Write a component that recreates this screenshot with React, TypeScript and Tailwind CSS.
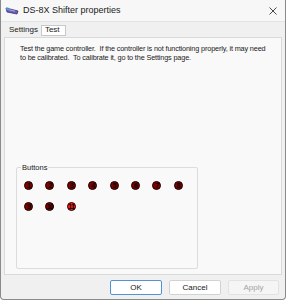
import React from 'react';

const buttons = [1, 2, 3, 4, 5, 6, 7, 8, 9, 10, 11];
const pressed = [11];

const App: React.FC = () => {
  return (
    <div
      className="w-[286px] h-[300px] flex flex-col bg-[#f0f0f0] border-x border-b border-[#8a8a8a] rounded-b-[4px] overflow-hidden text-[#1a1a1a]"
      style={{ fontFamily: '"Liberation Sans", Arial, sans-serif' }}
    >
      {/* title bar */}
      <div className="h-[22px] flex items-center bg-[#f7f7f7] border-b border-[#e4e4e4] pl-[4px] pr-[8px]">
        <svg width="14" height="10" viewBox="0 0 14 10" className="mr-[4px]">
          <path d="M1 2 L13 5 L12 8 L2 6 Z" fill="#6a5fb0" stroke="#3c2f80" strokeWidth="0.8" />
          <path d="M3 3.5 L10 5.2" stroke="#c7c2f0" strokeWidth="0.8" />
          <circle cx="2.5" cy="3" r="1.4" fill="#3aa0d8" />
        </svg>
        <span className="text-[9px] leading-none">DS-8X Shifter properties</span>
        <svg width="8" height="8" viewBox="0 0 8 8" className="ml-auto">
          <path d="M0.5 0.5 L7.5 7.5 M7.5 0.5 L0.5 7.5" stroke="#333" strokeWidth="0.9" />
        </svg>
      </div>

      {/* tabs */}
      <div className="h-[15px] flex items-center pl-[8px] pt-[1px] text-[8px] leading-none">
        <span className="pr-[3px]">Settings</span>
        <span className="h-[11px] w-[25px] px-[3px] flex items-center bg-white border border-[#c8c8c8]">
          Test
        </span>
      </div>

      {/* panel */}
      <div className="mx-[3px] h-[238px] bg-[#f9f9f9] border border-[#d9d9d9] flex flex-col">
        <p className="pl-[15px] pr-[10px] pt-[6px] text-[7.3px] leading-[9px] tracking-[-0.15px]">
          Test the game controller.&nbsp; If the controller is not functioning properly, it may need to be calibrated.&nbsp; To calibrate it, go to the Settings page.
        </p>

        <div className="relative ml-[11px] mt-[105px] w-[182px] h-[102px] border border-[#dcdcdc] rounded-[2px]">
          <span className="absolute -top-[5px] left-[4px] px-[1px] bg-[#f9f9f9] text-[7.5px] leading-[9px]">
            Buttons
          </span>
          <div className="grid grid-cols-8 gap-y-[12px] pl-[7px] pt-[13px] w-[178px]">
            {buttons.map((b) => (
              <div key={b} className="w-[21.3px] flex">
                <div
                  className={`w-[9px] h-[9px] rounded-full border border-[#1a0000] flex items-center justify-center text-[7px] font-bold leading-none tracking-[-0.8px] text-black ${
                    pressed.includes(b) ? 'bg-[#ff1a1a]' : 'bg-[#800000]'
                  }`}
                >
                  {b}
                </div>
              </div>
            ))}
          </div>
        </div>
      </div>

      {/* footer */}
      <div className="flex justify-end gap-[7px] pr-[6px] pt-[5px] text-[8px]">
        <button className="w-[52px] h-[15px] bg-white border border-[#4f94d4] rounded-[2px] leading-none">OK</button>
        <button className="w-[52px] h-[15px] bg-white border border-[#d2d2d2] rounded-[2px] leading-none">Cancel</button>
        <button className="w-[51px] h-[15px] bg-[#f5f5f5] border border-[#e2e2e2] rounded-[2px] leading-none text-[#a3a3a3]">Apply</button>
      </div>
    </div>
  );
};

export default App;
